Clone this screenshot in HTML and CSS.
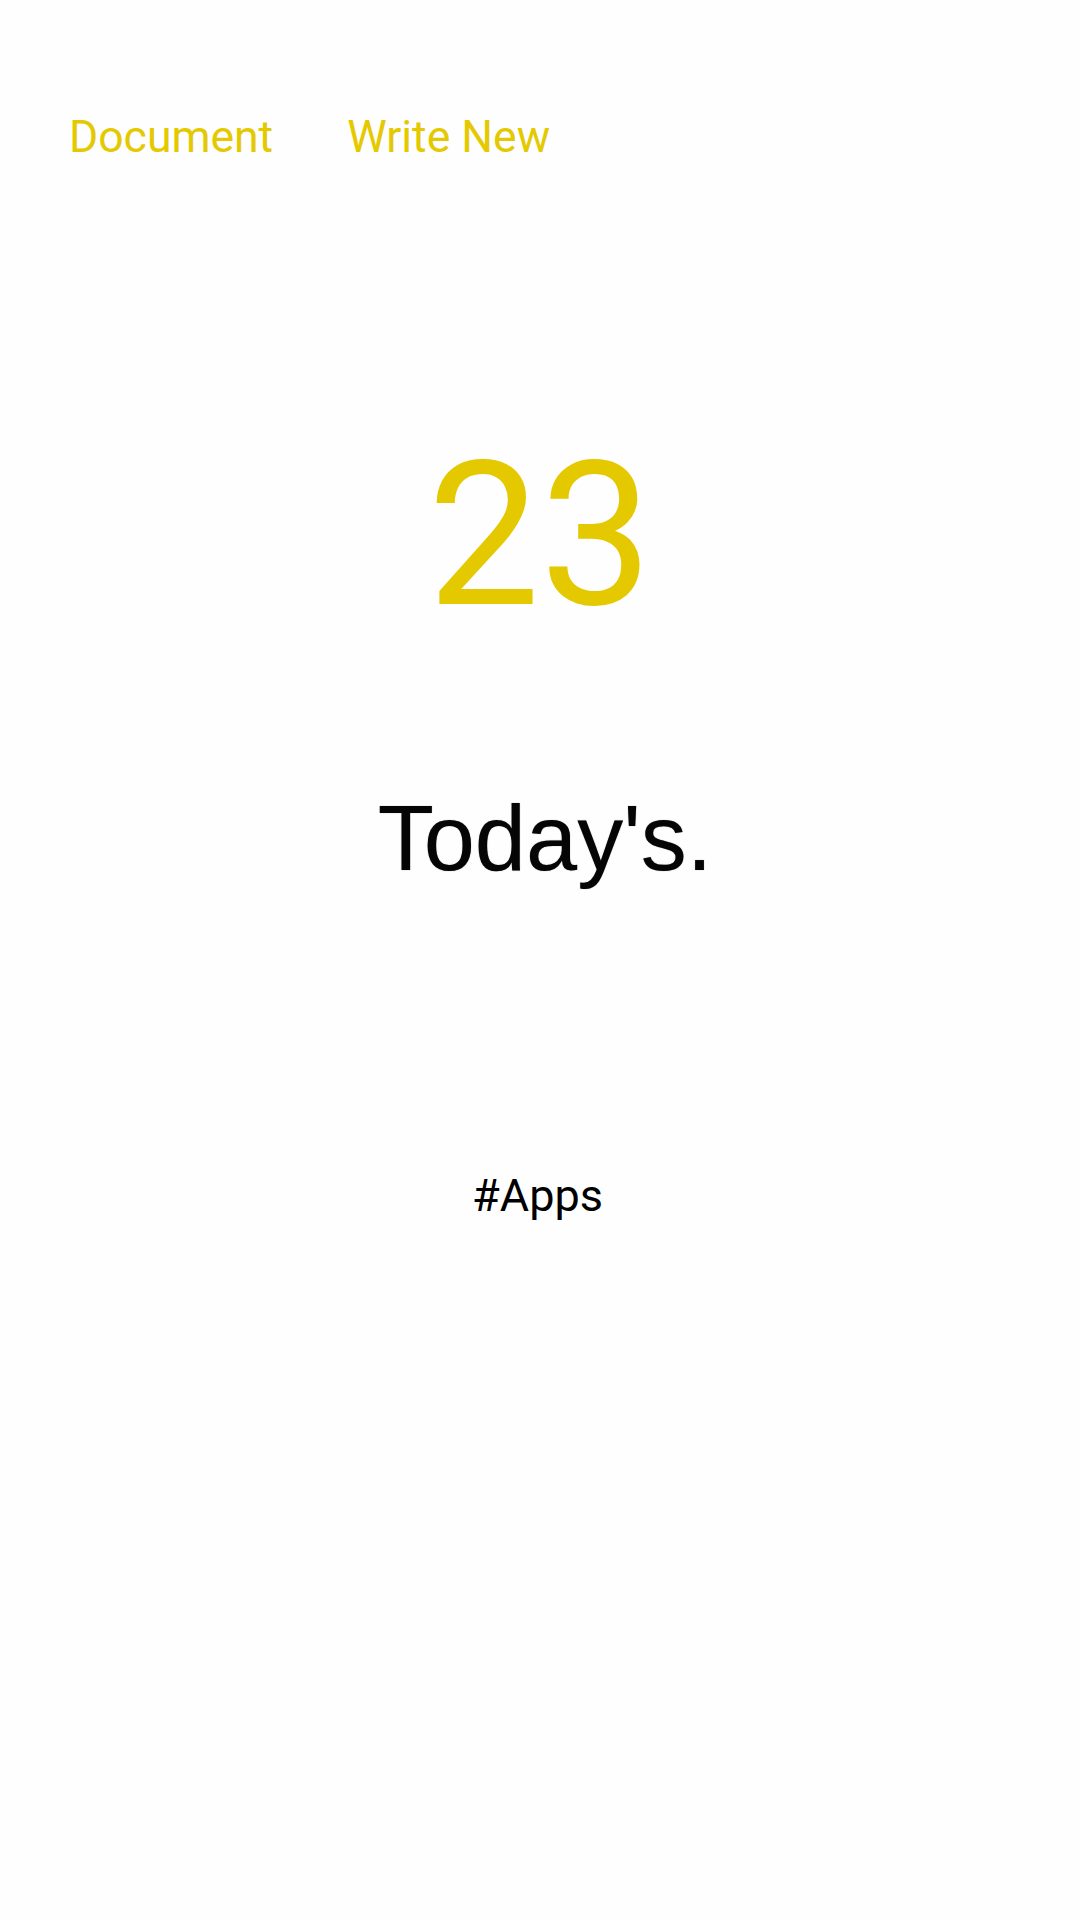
FILE: index.html
```html
<!DOCTYPE html>
<html lang="en">
<head>
<meta charset="utf-8">
<title>Today's</title>
<link rel="stylesheet" href="styles.css">
</head>
<body>
<header class="topbar">
  <a class="tab">Document</a>
  <a class="tab">Write New</a>
</header>
<main class="content">
  <div class="count">23</div>
  <div class="title">Today's.</div>
  <div class="tag">#Apps</div>
</main>
</body>
</html>
```
FILE: styles.css
```css
html, body {
  margin: 0;
  padding: 0;
  background: #fefefe;
  width: 1080px;
  height: 1920px;
  overflow: hidden;
}
body {
  font-family: Roboto, "Noto Sans", sans-serif;
}
.topbar {
  display: flex;
  gap: 74px;
  padding: 115px 0 0 69px;
}
.tab {
  font-size: 44.5px;
  line-height: 1;
  color: #e5c900;
  text-decoration: none;
}
.content {
  display: flex;
  flex-direction: column;
  align-items: center;
}
.count {
  margin-top: 276px;
  font-size: 200px;
  line-height: 1;
  color: #e5c900;
  margin-left: 0;
}
.title {
  margin-top: 156px;
  font-family: "Liberation Sans", Arial, sans-serif;
  font-size: 92px;
  line-height: 1;
  color: #050505;
  margin-left: 10px;
  text-shadow: 0 0 1px rgba(0, 0, 0, 0.5);
}
.tag {
  margin-top: 289px;
  font-size: 45px;
  line-height: 1;
  color: #000;
  margin-left: -5px;
}
```
